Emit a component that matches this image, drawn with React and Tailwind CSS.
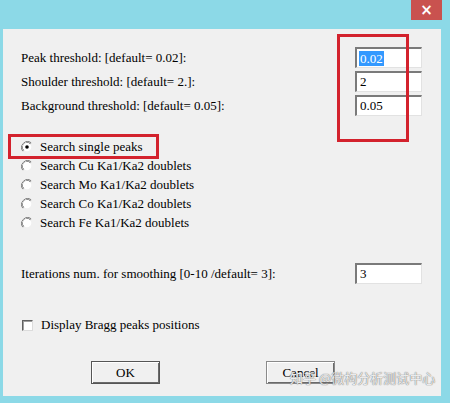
import React from 'react';

const serif = { fontFamily: '"Liberation Serif", "Times New Roman", serif' };

function Field({ value, selected }) {
  return (
    <div className="w-[67px] h-[21px] bg-white border-t-2 border-l-2 border-t-[#7a7a7a] border-l-[#7a7a7a] border-r border-b border-r-[#e2e2e2] border-b-[#e2e2e2] flex items-center pl-[2px] text-[13px] text-black">
      {selected ? <span className="bg-[#3399ff] text-white px-[1px] leading-[15px]">{value}</span> : <span className="px-[1px]">{value}</span>}
    </div>
  );
}

function Radio({ checked, label }) {
  return (
    <div className="h-[19px] flex items-center gap-[7px] pl-[18px]">
      <svg width="12" height="12" viewBox="0 0 12 12">
        <path d="M10.2 1.8 A6 6 0 0 0 1.8 10.2" fill="none" stroke="#808080" strokeWidth="1" />
        <path d="M9.4 2.6 A4.9 4.9 0 0 0 2.6 9.4" fill="none" stroke="#404040" strokeWidth="1" />
        <circle cx="6" cy="6" r="4.3" fill="#fff" />
        {checked && <circle cx="6" cy="6" r="1.8" fill="#000" />}
      </svg>
      <span>{label}</span>
    </div>
  );
}

function Button({ children, def }) {
  return (
    <button
      className={`w-[69px] h-[23px] bg-[#f0f0f0] text-[13px] text-black flex items-center justify-center border ${def ? 'border-[#555]' : 'border-[#8a8a8a]'} shadow-[inset_1px_1px_0_#fff,inset_-1px_-1px_0_#6a6a6a]`}
      style={serif}
    >
      {children}
    </button>
  );
}

export default function App() {
  return (
    <div className="w-[450px] h-[403px] bg-[#8cd9e7] flex flex-col relative overflow-hidden text-[13px] text-black" style={serif}>
      <div className="h-[29px] flex justify-end pr-[8px]">
        <div className="w-[31px] h-[20px] bg-[#c9524f] flex items-center justify-center text-white text-[15px] font-bold" style={{ fontFamily: '"DejaVu Sans", sans-serif' }}>
          ×
        </div>
      </div>

      <div className="ml-[3px] w-[438px] h-[367px] bg-[#f0f0f0] relative flex flex-col">
        <div className="flex flex-col gap-[3px] pt-[18px]">
          {[
            ['Peak threshold: [default= 0.02]:', '0.02', true],
            ['Shoulder threshold: [default= 2.]:', '2', false],
            ['Background threshold: [default= 0.05]:', '0.05', false],
          ].map(([label, v, sel]) => (
            <div key={label} className="flex items-center justify-between pl-[18px] pr-[19px] h-[21px]">
              <span>{label}</span>
              <Field value={v} selected={sel} />
            </div>
          ))}
        </div>

        <div className="flex flex-col mt-[21px]">
          <Radio checked label="Search single peaks" />
          <Radio label="Search Cu Ka1/Ka2 doublets" />
          <Radio label="Search Mo Ka1/Ka2 doublets" />
          <Radio label="Search Co Ka1/Ka2 doublets" />
          <Radio label="Search Fe Ka1/Ka2 doublets" />
        </div>

        <div className="flex items-center justify-between pl-[18px] pr-[19px] mt-[31px] h-[21px]">
          <span>Iterations num. for smoothing [0-10 /default= 3]:</span>
          <Field value="3" />
        </div>

        <div className="flex items-center gap-[8px] pl-[19px] mt-[33px] h-[16px]">
          <div className="w-[11px] h-[11px] bg-white border-t border-l border-t-[#606060] border-l-[#606060] border-r border-b border-r-[#dcdcdc] border-b-[#dcdcdc] shadow-[inset_1px_1px_0_#a0a0a0]" />
          <span>Display Bragg peaks positions</span>
        </div>

        <div className="flex mt-[28px] pl-[88px] gap-[106px]">
          <Button def>OK</Button>
          <Button>Cancel</Button>
        </div>

        <div className="absolute left-[334px] top-[5px] w-[72px] h-[108px] border-[3px] border-[#d3222d]" />
        <div className="absolute left-[5px] top-[105px] w-[151px] h-[25px] border-[3px] border-[#d3222d]" />
      </div>

      <div
        className="absolute left-[290px] top-[369px] text-[13px] leading-[18px] whitespace-nowrap text-white/85"
        style={{ fontFamily: '"Noto Sans CJK SC", sans-serif', textShadow: '0 0 1px #777, 0 0 1px #777' }}
      >
        知乎 @微构分析测试中心
      </div>
    </div>
  );
}
